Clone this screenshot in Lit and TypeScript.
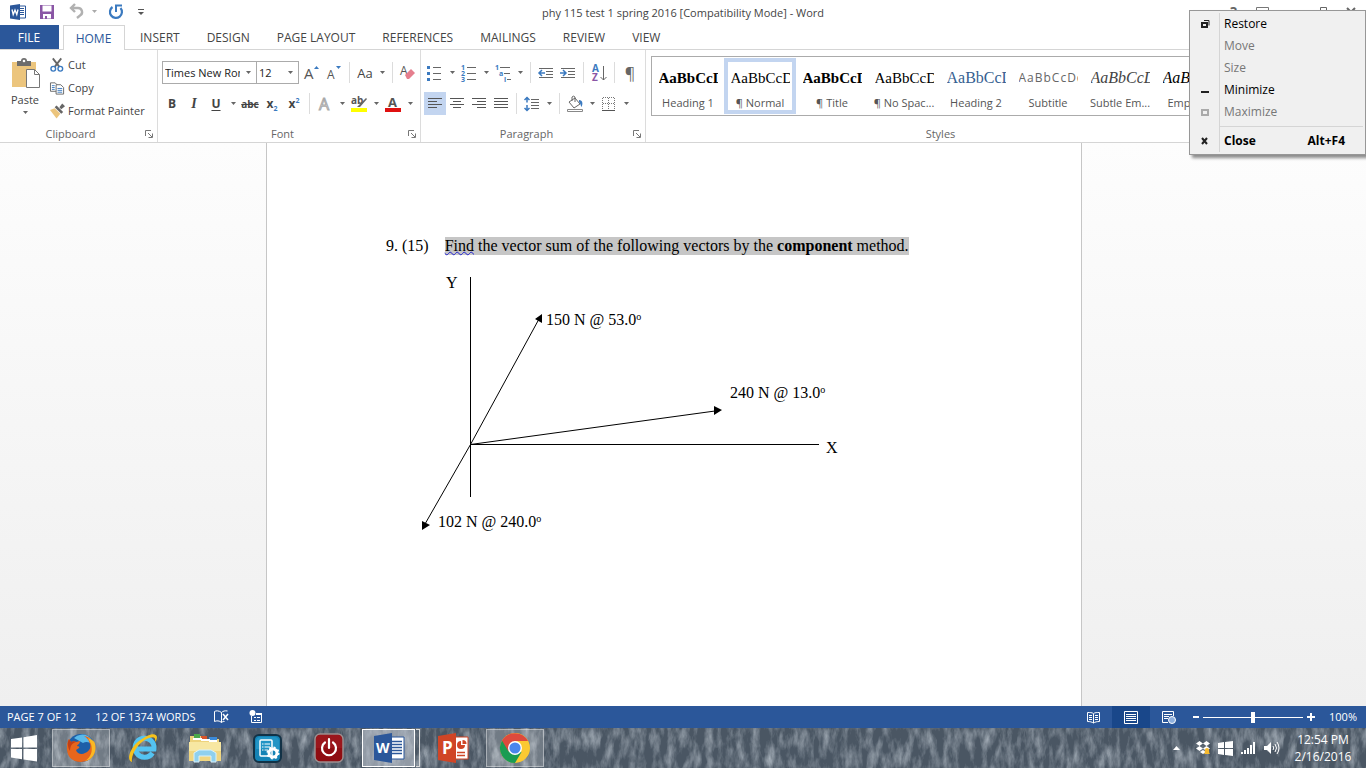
import { LitElement, html, css, svg } from "lit";
import { customElement } from "lit/decorators.js";
import { classMap } from "lit/directives/class-map.js";

const icon = (body: unknown, w = 16, h = 16) =>
  html`<svg class="ico" width=${w} height=${h} viewBox="0 0 ${w} ${h}" fill="none" aria-hidden="true">${body}</svg>`;

const caret = icon(svg`<path d="M0 0h5L2.500 3z" fill="#666"/>`, 5, 3);

const WORD_SMALL = svg`
  <path d="M9 2h6.500v12H9z" fill="#fff" stroke="#2b579a"/>
  <path d="M10 4.500h4M10 6.500h4M10 8.500h4M10 10.500h4" stroke="#2b579a"/>
  <path d="M0 1.500 10 0v16L0 14.500z" fill="#2b579a"/>
  <path d="M2 5.500l1.200 5L5 6l1.800 4.500 1.200-5" stroke="#fff" stroke-width="1.300"/>`;
const SAVE = svg`
  <path d="M1 1h14v14H1z" fill="#8a56a5"/>
  <path d="M3.500 1.500h9v6h-9z" fill="#fff"/><path d="M4 10h8v4.500H4z" fill="#fff"/>
  <path d="M6 12h2v3H6z" fill="#8a56a5"/>`;
const UNDO = svg`<path d="M6 0 2 4l4 4M2.500 4H9a4 4 0 0 1 2 7.500L8 14" stroke="#b1b1b1" stroke-width="2.400"/>`;
const REDO = svg`<path d="M4.500 3a6 6 0 1 0 8 1" stroke="#3b7ac0" stroke-width="2.200"/><path d="M8 8V1.500h6" stroke="#3b7ac0" stroke-width="2"/>`;
const CUSTOM = svg`<path d="M0 .5h6" stroke="#555"/><path d="M0 3h6L3 6z" fill="#555"/>`;

const PASTE = svg`
  <path d="M1 4h24v25H1z" fill="#ecc57d"/>
  <path d="M6 3h4a3 3 0 0 1 6 0h4v5H6z" fill="#6d6d6d"/><circle cx="13" cy="3" r="1.300" fill="#fff"/>
  <path d="M15.500 11.500h8l5 5v13h-13z" fill="#fff" stroke="#777"/>
  <path d="M23.500 11.500v5h5" stroke="#777"/>`;
const CUT = svg`
  <path d="M3 1l7 9M12 1 5 10" stroke="#666" stroke-width="2"/>
  <circle cx="3.500" cy="12" r="2.500" stroke="#3b7ac0" stroke-width="1.500"/>
  <circle cx="11" cy="12" r="2.500" stroke="#3b7ac0" stroke-width="1.500"/>`;
const COPY = svg`
  <path d="M.5 2.500h5l2 2v7h-7z" fill="#fff" stroke="#666"/><path d="M2 5.500h3M2 7.500h3M2 9.500h3" stroke="#3b7ac0"/>
  <path d="M6.500 4.500h5l3 3v7h-8z" fill="#fff" stroke="#666"/><path d="M8 8.500h5M8 10.500h5M8 12.500h5" stroke="#3b7ac0"/>`;
const PAINTER = svg`
  <path d="M0 7l5-2 6 6-4 5z" fill="#ecc57d"/>
  <path d="M5 4l2-2 7 7-2 2z" fill="#666"/><path d="M10 4l3-4 3 3-4 3z" fill="#666"/>`;
const LAUNCH = svg`<path d="M.5 6V.5H6" stroke="#777"/><path d="M3 3l4 4M7.500 3.500v4h-4" stroke="#777"/>`;

const glyph = (t: string, cls: string) => html`<span class=${cls}>${t}</span>`;
const ERASER = svg`<text x="0" y="10" class="g12">A</text><path d="M5 10l6-6 4 4-6 6H7z" fill="#e57f8e"/>`;
const GROW = svg`<text x="0" y="14" class="g15">A</text><path d="M10 4h5l-2.500-3z" fill="#3b7ac0"/>`;
const SHRINK = svg`<text x="1" y="14" class="g12">A</text><path d="M10 1h5l-2.500 3z" fill="#3b7ac0"/>`;
const EFFECTS = svg`<text x="2" y="14" class="fx">A</text>`;
const HILITE = svg`<text x="0" y="8" class="g10">ab</text><path d="M6 11l9-9 1 1-7 8z" fill="#666"/><path d="M0 12h16v4H0z" fill="#ff0"/>`;
const FCOLOR = svg`<text x="3" y="11" class="g13">A</text><path d="M0 12h16v4H0z" fill="#e01010"/>`;
const BULLETS = svg`<path d="M6 2.500h8M6 8.500h8M6 14.500h8" stroke="#666"/><path d="M0 1h3v3H0zM0 7h3v3H0zM0 13h3v3H0z" fill="#3b7ac0"/>`;
const NUMBERS = svg`<path d="M6 2.500h9M6 8.500h9M6 14.500h9" stroke="#666"/><text x="0" y="5" class="n">1</text><text x="0" y="11" class="n">2</text><text x="0" y="17" class="n">3</text>`;
const MULTI = svg`<path d="M5 2.500h10M9 8.500h6M12 14.500h4" stroke="#666"/><text x="0" y="5" class="n">1</text><text x="4" y="11" class="n">a</text><text x="9" y="17" class="n">i</text>`;
const OUTDENT = svg`<path d="M1 3.500h14M8 6.500h7M8 9.500h7M1 12.500h14" stroke="#666"/><path d="M7 8H1M4 5 1 8l3 3" stroke="#3b7ac0" stroke-width="1.500"/>`;
const INDENT = svg`<path d="M1 3.500h14M8 6.500h7M8 9.500h7M1 12.500h14" stroke="#666"/><path d="M0 8h6M3 5l3 3-3 3" stroke="#3b7ac0" stroke-width="1.500"/>`;
const SORT = svg`<text x="1" y="7" class="sa">A</text><text x="1" y="16" class="sz">Z</text><path d="M12.500 1v14M9.500 12l3 3 3-3" stroke="#666"/>`;
const lines = (d: string) => svg`<path d=${d} stroke="#555"/>`;
const LEFT = lines("M1 2.500h14M1 5.500h9M1 8.500h14M1 11.500h9");
const CENTER = lines("M1 2.500h14M4 5.500h8M1 8.500h14M4 11.500h8");
const RIGHT = lines("M1 2.500h14M6 5.500h9M1 8.500h14M6 11.500h9");
const FULL = lines("M1 2.500h14M1 5.500h14M1 8.500h14M1 11.500h14");
const SPACING = svg`<path d="M7 3.500h8M7 6.500h8M7 9.500h8M7 12.500h8" stroke="#666"/><path d="M3 1v5.500M.5 4 3 1.500 5.500 4M3 9v5.500M.5 12 3 14.500 5.500 12" stroke="#3b7ac0" stroke-width="1.500"/>`;
const SHADING = svg`<path d="M2 6l6-4 5 6-6 4z" fill="#fff" stroke="#666"/><path d="M8 6V1a2 2 0 0 0-3 0v4" stroke="#666"/><path d="M12 4c4 0 4 4 2.500 7-1-1-.5-3-2.500-5z" fill="#3b7ac0"/><path d="M.5 13.500h15v2H.5z" fill="#fff" stroke="#888"/>`;
const BORDERS = svg`<path d="M1.500 2v12M7.500 2v12M13.500 2v12M2 1.500h12M2 7.500h12" stroke="#777" stroke-dasharray="1 1"/><path d="M1 14.500h13" stroke="#555"/>`;

const WIN = svg`<path d="M0 4l11-1.600v10.100H0zM12.500 2.200 26 0v12.500H12.500zM0 14h11v10.200L0 22.600zM12.500 14H26v12.400l-13.500-2z" fill="#fff"/>`;
const FIREFOX = svg`
  <circle cx="15" cy="15" r="14" fill="#1d5fa8"/>
  <path d="M8 5a12 12 0 0 1 14-2c4 3 5 6 5 9-3-3-7-4-10-2z" fill="#58b9ea"/>
  <path d="M29 11c2 9-4 18-14 18S0 22 1 13c0-3 1-5 2-7l2 3c2-1 4-1 5 0l4-1c0 3-3 4-3 5 2 0 3 1 2 2l-3 2c1 4 6 5 9 3 5-2 6-6 5-9-1-4-3-6-6-8 7 1 9 5 9 9z" fill="#e8661c"/>
  <path d="M29 11c2 9-3 16-10 17 6-4 8-10 6-17l-3-6c5 2 7 4 7 6z" fill="#fbb823"/>
  <path d="M3 6l2 3c2-1 4-1 5 0-4 1-6 4-6 9-2-3-3-8-1-12z" fill="#c13f16"/>`;
const IE = svg`
  <path d="M24.500 20a9.500 9.500 0 1 1 1.500-4H9" stroke="#54c3f1" stroke-width="5"/>
  <path d="M4 29c-6-2-2-14 7-21S28-1 29 4c0 2-1 4-2 5 1-4-1-6-6-4C12 8 3 20 4 29z" fill="#f7c21b"/>`;
const FOLDER = svg`
  <path d="M1 3h12l2 3h15v20H1z" fill="#eed37c"/>
  <path d="M5 1h6v5H5z" fill="#4aa84a"/><path d="M12 3h6v4h-6z" fill="#d9542b"/><path d="M20 4h8v4h-8z" fill="#3b8ad8"/>
  <path d="M4 5h9v2H4zM12 6h9v2h-9zM20 7h8v2h-8z" fill="#fff"/>
  <path d="M0 9h32v19H0z" fill="#f7e7a2"/><path d="M0 18h32v10H0z" fill="#f0d680"/>
  <path d="M5 29v-9l5-3h12l5 3v9h-5v-6H10v6z" fill="#8fd0ee" stroke="#d8f1fb"/>`;
const TASKS = svg`
  <rect x="1" y="1" width="27" height="27" rx="5" fill="#1583b5" stroke="#123246" stroke-width="2"/>
  <path d="M3 15h23V8q0-5-5-5H8Q3 3 3 8z" fill="#2ba0d0" opacity=".6"/>
  <rect x="7" y="6" width="12" height="16" rx="1" stroke="#fff" stroke-width="1.500"/>
  <path d="M9 10h8M9 13h8M9 16h6" stroke="#fff" stroke-dasharray="1.500 1 12"/>
  <circle cx="20" cy="19" r="4" stroke="#fff" stroke-width="3"/><circle cx="20" cy="19" r="5.500" stroke="#fff" stroke-width="2" stroke-dasharray="2 2.300"/>`;
const POWER = svg`
  <rect x="1" y="1" width="28" height="28" rx="5" fill="#8f0d12" stroke="#9d8f90" stroke-width="1.500"/>
  <path d="M2 15h26V6q0-4-4-4H6Q2 2 2 6z" fill="#a52026" opacity=".5"/>
  <path d="M11 9.500a7 7 0 1 0 8 0M15 6v9" stroke="#fff" stroke-width="2.200" stroke-linecap="round"/>`;
const WORD = svg`
  <path d="M16 4h14v22H16z" fill="#fff" stroke="#2b579a"/>
  <path d="M18 8.500h10M18 11.500h10M18 14.500h10M18 17.500h10M18 20.500h10" stroke="#2b579a" stroke-width="1.500"/>
  <path d="M0 3l18-3v30L0 27z" fill="#2b579a"/><text x="2" y="20" class="appw">W</text>`;
const PPT = svg`
  <path d="M16 4h14v22H16z" fill="#fff" stroke="#d04526"/>
  <path d="M19 19.500h8M19 22.500h8" stroke="#d04526" stroke-width="1.500"/><path d="M23 8a4 4 0 1 0 4 4h-4z" fill="#d04526"/><path d="M24.500 7a4 4 0 0 1 4 4h-4z" fill="#d04526"/>
  <path d="M0 3l18-3v30L0 27z" fill="#d04526"/><text x="4" y="21" class="appp">P</text>`;
const CHROME = svg`
  <circle cx="15" cy="15" r="15" fill="#fbc932"/>
  <path d="M15 15 2 7.500A15 15 0 0 0 15 30l6.500-11z" fill="#1a9c52"/>
  <path d="M2 7.500A15 15 0 0 1 28 8H15L8.500 18.500z" fill="#dd4a3d"/>
  <circle cx="15" cy="15" r="7" fill="#fff"/><circle cx="15" cy="15" r="5.600" fill="#4a86ec"/>`;

const PROOF = svg`<path d="M7.500 3.500v10M7.500 3.500C5 1.500 2 1.500 .5 2.500v10c2-1 5-1 7 1 1-1 2-1 3-1M7.500 3.500C9 2 11 1.500 13.500 2" stroke="#fff"/><path d="M9 5l5 6M14 5l-5 6" stroke="#fff" stroke-width="1.500"/>`;
const MACRO = svg`<path d="M2.500 7v6.500h10v-9H8" stroke="#fff"/><circle cx="3.500" cy="4" r="3" fill="#fff"/><path d="M7 4h6v2H7z" fill="#fff"/><path d="M5 8.500h2M8 8.500h3M5 11.500h2M8 11.500h3" stroke="#fff"/>`;
const READ = svg`<path d="M6.500 3v9M6.500 2.500C5 1.500 3 1.500.5 1.500v9c2.500 0 4.500.5 6 1.500 1.500-1 3.500-1.500 6-1.500v-9c-2.500 0-4.500 0-6 1M2 4.500h3M2 6.500h3M2 8.500h3M8 4.500h3M8 6.500h3M8 8.500h3" stroke="#fff"/>`;
const PRINT = svg`<path d="M.5.500h13v12H.5z" stroke="#fff"/><path d="M2 3.500h10M2 5.500h10M2 7.500h10M2 9.500h10" stroke="#fff"/>`;
const WEB = svg`<path d="M6 11.500H.5V.500h11V5M2 3.500h8M2 5.500h5M2 7.500h4" stroke="#fff"/><circle cx="10" cy="9" r="3.500" fill="#8fb0dd" stroke="#fff"/>`;

@customElement("word-ribbon")
class WordRibbon extends LitElement {
  static styles = css`
    :host { display: flex; flex: none; height: 92px; padding-right: 120px; background: #fff; border-bottom: 1px solid #d5d5d5; font: 11px/16px "Open Sans", sans-serif; color: #444; }
    button { font: inherit; color: inherit; background: none; border: 0; padding: 0; margin: 0; display: flex; align-items: center; justify-content: center; white-space: nowrap; }
    svg.ico { display: block; overflow: visible; flex: none; }
    .group { display: flex; flex-direction: column; padding-top: 11px; border-right: 1px solid #dcdcdc; margin: 0; box-sizing: border-box; }
    .grow { flex: 1; min-width: 0; border: 0; padding: 6px 0 0 5px; }
    .foot { display: flex; align-items: center; height: 16px; margin-top: auto; text-align: center; color: #666; }
    .foot span { flex: 1; }
    .foot button { width: 16px; height: 16px; }
    .clip { width: 158px; padding-top: 3px; }
    .clipbody { display: flex; }
    .paste { flex-direction: column; justify-content: flex-start; width: 50px; padding-top: 5px; gap: 4px; }
    .paste span { line-height: 15px; }
    .side { display: flex; flex-direction: column; }
    .side button { height: 23px; gap: 3px; justify-content: flex-start; }
    .side svg { width: 15px; }
    .font { width: 263px; padding-left: 3px; }
    .para { width: 225px; padding-left: 3px; }
    .row { display: flex; align-items: center; height: 23px; margin-bottom: 8px; }
    .tool { width: 22px; height: 23px; }
    .tool.on { background: #c3d5f0; }
    .drop { width: 12px; height: 23px; }
    .sep { width: 1px; height: 21px; margin: 0 4px; background: #dcdcdc; }
    select { appearance: none; box-sizing: border-box; height: 23px; border: 1px solid #ababab; border-radius: 0; margin: 0 0 0 1px; padding: 0 0 0 2px; font: 11px/16px "Open Sans", sans-serif; color: #222; background: #fff url("data:image/svg+xml,%3Csvg xmlns='http://www.w3.org/2000/svg' width='5' height='3'%3E%3Cpath d='M0 0h5L2.500 3z' fill='%23666'/%3E%3C/svg%3E") no-repeat right 5px center; }
    .name { width: 95px; padding-right: 16px; }
    .size { width: 43px; margin-left: -1px; margin-right: 2px; }
    .b { font: bold 12px "Open Sans"; }
    .i { font: italic bold 14px "Liberation Serif"; }
    .u { font: bold 12px "Open Sans"; text-decoration: underline; text-underline-offset: 2px; }
    .s { font: bold 10px "Open Sans"; text-decoration: line-through; }
    .aa { font: 13px "Open Sans"; }
    .pil { font: 16px "Open Sans"; color: #666; }
    sub, sup { font-size: 7px; color: #3b7ac0; line-height: 0; }
    text { fill: #555; font-family: "Open Sans"; }
    .g15 { font-size: 15px; } .g13 { font-size: 13px; font-weight: bold; } .g12 { font-size: 12px; } .g10 { font-size: 10px; font-weight: bold; }
    .fx { font-size: 16px; fill: #fff; stroke: #aaa; }
    .n { font-size: 7px; font-weight: bold; fill: #3b7ac0; }
    .sa { font-size: 10px; font-weight: bold; fill: #3b7ac0; } .sz { font-size: 10px; font-weight: bold; fill: #8a56a5; }
    .gallery { display: flex; overflow: hidden; height: 58px; border: 1px solid #ababab; }
    .style { flex: none; box-sizing: border-box; width: 72px; margin: 1px 0; padding-top: 5px; flex-direction: column; justify-content: flex-start; gap: 7px; border: 4px solid transparent; }
    .style.on { border-color: #c3d5f0; }
    .sample { width: 59px; height: 22px; flex: none; overflow: hidden; text-align: left; font: 16px/22px "Liberation Serif", serif; color: #000; }
    .label { line-height: 14px; color: #555; }
    .bold { font-weight: bold; font-size: 15px; }
    .plain { font-size: 15px; }
    .h2 { font-size: 16px; color: #365f91; }
    .sub { font: 12px/22px "Open Sans"; letter-spacing: 1px; color: #666; }
    .sem { font-style: italic; color: #444; }
    .em { font-style: italic; }
  `;

  private tool(label: string, body: unknown, on = false) {
    return html`<button class=${classMap({ tool: true, on })} aria-label=${label}>${body}</button>`;
  }
  private drop(label: string) {
    return html`<button class="drop" aria-label="${label} options">${caret}</button>`;
  }
  private foot(label: string, launcher = true) {
    return html`<div class="foot"><span>${label}</span>${launcher ? html`<button aria-label="${label} settings">${icon(LAUNCH, 8, 8)}</button>` : html`<button disabled aria-hidden="true"></button>`}</div>`;
  }

  render() {
    const sep = html`<i class="sep"></i>`;
    const styles = [
      ["bold", "AaBbCcDd", "Heading 1"], ["plain", "AaBbCcDd", "¶ Normal"], ["bold", "AaBbCcDd", "¶ Title"],
      ["plain", "AaBbCcDd", "¶ No Spac..."], ["h2", "AaBbCcDd", "Heading 2"], ["sub", "AaBbCcDd", "Subtitle"],
      ["sem", "AaBbCcDd", "Subtle Em..."], ["em", "AaBbCcDd", "Emphasis"],
    ];
    return html`
      <section class="group clip">
        <div class="clipbody">
          <button class="paste">${icon(PASTE, 29, 30)}<span>Paste</span>${caret}</button>
          <div class="side">
            <button>${icon(CUT)}Cut</button>
            <button>${icon(COPY)}Copy</button>
            <button>${icon(PAINTER)}Format Painter</button>
          </div>
        </div>
        ${this.foot("Clipboard")}
      </section>
      <section class="group font">
        <div class="row">
          <select class="name" aria-label="Font"><option>Times New Roman</option></select>
          <select class="size" aria-label="Font size"><option>12</option></select>
          ${this.tool("Grow font", icon(GROW))}${this.tool("Shrink font", icon(SHRINK))}${sep}
          ${this.tool("Change case", glyph("Aa", "aa"))}${this.drop("Change case")}${sep}
          ${this.tool("Clear formatting", icon(ERASER))}
        </div>
        <div class="row">
          ${this.tool("Bold", glyph("B", "b"))}${this.tool("Italic", glyph("I", "i"))}
          ${this.tool("Underline", glyph("U", "u"))}${this.drop("Underline")}
          ${this.tool("Strikethrough", glyph("abc", "s"))}
          ${this.tool("Subscript", html`<span class="b">x<sub>2</sub></span>`)}
          ${this.tool("Superscript", html`<span class="b">x<sup>2</sup></span>`)}${sep}
          ${this.tool("Text effects", icon(EFFECTS))}${this.drop("Text effects")}
          ${this.tool("Highlight", icon(HILITE))}${this.drop("Highlight")}
          ${this.tool("Font color", icon(FCOLOR))}${this.drop("Font color")}
        </div>
        ${this.foot("Font")}
      </section>
      <section class="group para">
        <div class="row">
          ${this.tool("Bullets", icon(BULLETS))}${this.drop("Bullets")}
          ${this.tool("Numbering", icon(NUMBERS))}${this.drop("Numbering")}
          ${this.tool("Multilevel list", icon(MULTI))}${this.drop("Multilevel list")}${sep}
          ${this.tool("Decrease indent", icon(OUTDENT))}${this.tool("Increase indent", icon(INDENT))}${sep}
          ${this.tool("Sort", icon(SORT))}${sep}
          ${this.tool("Show marks", glyph("¶", "pil"))}
        </div>
        <div class="row">
          ${this.tool("Align left", icon(LEFT), true)}${this.tool("Center", icon(CENTER))}
          ${this.tool("Align right", icon(RIGHT))}${this.tool("Justify", icon(FULL))}${sep}
          ${this.tool("Line spacing", icon(SPACING))}${this.drop("Line spacing")}${sep}
          ${this.tool("Shading", icon(SHADING))}${this.drop("Shading")}
          ${this.tool("Borders", icon(BORDERS))}${this.drop("Borders")}
        </div>
        ${this.foot("Paragraph")}
      </section>
      <section class="group grow">
        <div class="gallery">
          ${styles.map(([cls, text, label], i) => html`
            <button class=${classMap({ style: true, on: i === 1 })}>
              <span class="sample ${cls}">${text}</span><span class="label">${label}</span>
            </button>`)}
        </div>
        ${this.foot("Styles", false)}
      </section>`;
  }
}

@customElement("word-page")
class WordPage extends LitElement {
  static styles = css`
    :host { display: flex; flex: 1; min-height: 0; overflow: hidden; justify-content: center; padding-right: 18px; background: linear-gradient(#fdfdfd, #efefef); font: 16px/18px "Liberation Serif", "Times New Roman", serif; color: #000; }
    .page { box-sizing: border-box; width: 816px; background: #fff; border: solid #c6c6c6; border-width: 0 1px; padding: 94px 96px 0 119px; }
    .question { display: flex; margin: 0; gap: 16px; white-space: nowrap; }
    .picked { background: #c6c6c6; }
    .flag { text-decoration: underline wavy #2020d0 1px; text-underline-offset: 0; }
    svg { display: block; margin-top: 7px; overflow: visible; }
    .o { font-size: 10px; }
  `;
  render() {
    const label = (x: number, y: number, t: string) => svg`<text x=${x} y=${y}>${t}<tspan class="o" dy="-5">o</tspan></text>`;
    return html`
      <article class="page">
        <p class="question">
          <span>9. (15)</span>
          <span class="picked"><span class="flag">Find</span> the vector sum of the following vectors by the <b>component</b> method.</span>
        </p>
        <svg width="480" height="280" viewBox="0 0 480 280" role="img" aria-label="Vector diagram">
          <path d="M84.500 15v220M84 182.500h349" stroke="#000"/>
          <path d="M84.500 182.500 153 57M84.500 182.500 329 149M84.500 182.500 39 262" stroke="#000"/>
          <path d="M156 52v9l-7-4zM336 148l-8-4v9zM36 268v-9l8 4z"/>
          <text x="60" y="26">Y</text><text x="440" y="191">X</text>
          ${label(160, 63, "150 N @ 53.0")}${label(344, 136, "240 N @ 13.0")}${label(52, 265, "102 N @ 240.0")}
        </svg>
      </article>`;
  }
}

@customElement("app-root")
class AppRoot extends LitElement {
  static styles = css`
    :host { display: flex; flex-direction: column; height: 100vh; overflow: hidden; position: relative; font: 11px/16px "Open Sans", sans-serif; color: #444; background: #fff; }
    button { font: inherit; color: inherit; background: none; border: 0; padding: 0; margin: 0; display: flex; align-items: center; justify-content: center; white-space: nowrap; }
    svg.ico { display: block; overflow: visible; flex: none; }
    .title { display: grid; grid-template-columns: 1fr auto 1fr; align-items: center; flex: none; height: 25px; }
    .quick { display: flex; align-items: center; padding-left: 9px; padding-bottom: 2px; }
    .quick button { width: 18px; height: 22px; }
    .quick .save { width: 40px; }
    .quick .mid { width: 20px; }
    .quick .thin { width: 14px; }
    .quick .wide { width: 30px; }
    .caption { display: flex; justify-content: flex-end; padding-right: 1px; padding-bottom: 2px; }
    .caption button { width: 29px; height: 22px; }
    .caption .gap { margin-right: 30px; }
    .caption .q { font: bold 14px "Open Sans"; color: #666; }
    .tabs { display: flex; flex: none; height: 25px; box-sizing: border-box; border-bottom: 1px solid #d5d5d5; line-height: 24px; }
    .tabs button { padding: 2px 14px 0 13px; font-size: 12px; height: 24px; }
    .tabs .file { width: 59px; margin-right: 4px; background: #2b579a; color: #fff; }
    .tabs .home { box-sizing: border-box; width: 62px; height: 25px; margin-right: 2px; border: 1px solid #d5d5d5; border-bottom: 0; background: #fff; color: #2b579a; }
    .status { display: flex; align-items: center; flex: none; height: 22px; padding: 0 9px 0 7px; background: #2b579a; color: #fff; }
    .status .words { margin: 0 20px 0 19px; }
    .status .tick { width: 14px; margin-right: 21px; }
    .push { margin-left: auto; }
    .status .view { width: 38px; height: 22px; }
    .status .view.on { background: #19478a; }
    .status .step { width: 15px; height: 22px; }
    input { appearance: none; width: 100px; height: 22px; margin: 0; background: linear-gradient(#fff, #fff) center / 100% 1px no-repeat; }
    input::-webkit-slider-thumb { appearance: none; width: 4px; height: 11px; background: #fff; }
    .pct { width: 39px; text-align: right; }
    .task { display: flex; align-items: center; flex: none; height: 40px; gap: 4px; color: #fff; background-color: #4a5663; background-image: url("data:image/svg+xml,%3Csvg xmlns='http://www.w3.org/2000/svg' width='683' height='40'%3E%3Cfilter id='n' x='0' y='0' width='100%25' height='100%25'%3E%3CfeTurbulence type='fractalNoise' baseFrequency='.13 .05' numOctaves='4' seed='4' stitchTiles='stitch'/%3E%3CfeColorMatrix values='0 0 0 0 .68 0 0 0 0 .74 0 0 0 0 .8 1.100 0 0 0 -.42'/%3E%3C/filter%3E%3Crect width='683' height='40' filter='url(%23n)'/%3E%3C/svg%3E"); }
    .app { box-sizing: border-box; width: 58px; height: 38px; border: 1px solid transparent; }
    .start { width: 48px; }
    .open { background: rgba(255,255,255,.22); border-color: rgba(255,255,255,.4); }
    .active { border: 0; gap: 1px; align-items: stretch; }
    .face { display: flex; align-items: center; justify-content: center; width: 54px; box-sizing: border-box; border: 1px solid #fff; background: rgba(215,222,232,.5); }
    .edge { width: 3px; border: 1px solid #ddd; border-left: 0; }
    text { fill: #fff; font-family: "Open Sans"; font-weight: bold; }
    .appw { font-size: 14px; } .appp { font-size: 17px; }
    .tray { display: flex; align-items: center; gap: 8px; margin-left: auto; padding-right: 14px; }
    .clock { width: 58px; margin-left: 6px; text-align: center; font-size: 12px; line-height: 17px; white-space: nowrap; }
    .menu { position: absolute; top: 10px; right: 0; width: 177px; box-sizing: border-box; padding: 2px 0; border: 1px solid #979797; background: linear-gradient(#d5d5d5, #d5d5d5) 29px 2px / 1px calc(100% - 4px) no-repeat #f0f0f0; box-shadow: 3px 3px 3px rgba(0,0,0,.45); color: #000; }
    .menu button { display: grid; grid-template-columns: 34px 1fr auto; width: 100%; height: 22px; padding-right: 20px; text-align: left; font-size: 12px; }
    .menu button:disabled { color: #777; }
    .menu .strong { font-weight: bold; }
    hr { border: 0; height: 1px; margin: 3px 2px 3px 30px; background: #d5d5d5; }
  `;

  private menuItem(label: string, mark: unknown, enabled: boolean, key = "") {
    return html`<button role="menuitem" class=${classMap({ strong: !!key })} ?disabled=${!enabled}><span>${mark}</span><span>${label}</span><span>${key}</span></button>`;
  }

  render() {
    const m = (b: unknown) => html`<svg class="ico" width="30" height="8" viewBox="-11 0 30 8" fill="none" aria-hidden="true">${b}</svg>`;
    const tabs = ["INSERT", "DESIGN", "PAGE LAYOUT", "REFERENCES", "MAILINGS", "REVIEW", "VIEW"];
    return html`
      <header class="title">
        <div class="quick">
          <button aria-label="Word">${icon(WORD_SMALL)}</button>
          <button class="save" aria-label="Save">${icon(SAVE)}</button>
          <button class="mid" aria-label="Undo">${icon(UNDO)}</button>
          <button class="thin" aria-label="Undo options">${icon(svg`<path d="M0 0h5L2.500 3z" fill="#aaa"/>`, 5, 3)}</button>
          <button class="wide" aria-label="Redo">${icon(REDO)}</button>
          <button class="mid" aria-label="Customize">${icon(CUSTOM, 6, 6)}</button>
        </div>
        <span>phy 115 test 1 spring 2016 [Compatibility Mode] - Word</span>
        <div class="caption">
          <button class="q" aria-label="Help">?</button>
          <button class="gap" aria-label="Ribbon display">${icon(svg`<path d="M.5.500h12v9H.5zM.5 3.500h12" stroke="#777"/>`, 13, 10)}</button>
          <button aria-label="Restore">${icon(svg`<path d="M.5 3.500h7v6h-7zM3.500 3V.500h6v6H8" stroke="#666"/>`, 10, 10)}</button>
          <button aria-label="Close">${icon(svg`<path d="M1 1l8 8M9 1 1 9" stroke="#666" stroke-width="2"/>`, 10, 10)}</button>
        </div>
      </header>
      <nav class="tabs">
        <button class="file">FILE</button><button class="home">HOME</button>
        ${tabs.map((t) => html`<button>${t}</button>`)}
      </nav>
      <word-ribbon></word-ribbon>
      <word-page></word-page>
      <footer class="status">
        <span>PAGE 7 OF 12</span><span class="words">12 OF 1374 WORDS</span>
        <button class="tick" aria-label="Proofing">${icon(PROOF)}</button>
        <button class="tick" aria-label="Macros">${icon(MACRO)}</button>
        <button class="view push" aria-label="Read mode">${icon(READ, 13, 13)}</button>
        <button class="view on" aria-label="Print layout">${icon(PRINT, 14, 13)}</button>
        <button class="view" aria-label="Web layout">${icon(WEB, 14, 13)}</button>
        <button class="step" aria-label="Zoom out">${icon(svg`<path d="M0 1h6" stroke="#fff" stroke-width="2"/>`, 6, 2)}</button>
        <input type="range" min="0" max="100" value="50" aria-label="Zoom" />
        <button class="step" aria-label="Zoom in">${icon(svg`<path d="M0 4h8M4 0v8" stroke="#fff" stroke-width="2"/>`, 8, 8)}</button>
        <span class="pct">100%</span>
      </footer>
      <footer class="task">
        <button class="app start" aria-label="Start">${icon(WIN, 26, 26)}</button>
        <button class="app open" aria-label="Firefox">${icon(FIREFOX, 30, 30)}</button>
        <button class="app" aria-label="Internet Explorer">${icon(IE, 30, 30)}</button>
        <button class="app" aria-label="File Explorer">${icon(FOLDER, 32, 30)}</button>
        <button class="app" aria-label="Task settings">${icon(TASKS, 29, 29)}</button>
        <button class="app" aria-label="Power">${icon(POWER, 30, 30)}</button>
        <button class="app active" aria-label="Word"><span class="face">${icon(WORD, 30, 30)}</span><i class="edge"></i></button>
        <button class="app" aria-label="PowerPoint">${icon(PPT, 30, 30)}</button>
        <button class="app open" aria-label="Chrome">${icon(CHROME, 30, 30)}</button>
        <div class="tray">
          ${icon(svg`<path d="M0 4h7L3.500 0z" fill="#fff"/>`, 7, 4)}
          <span></span>
          ${icon(svg`<path d="M3.500 0 7 2.500 3.500 5 0 2.500zM10.500 0 14 2.500 10.500 5 7 2.500zM3.500 5 7 7.500 3.500 10 0 7.500zM10.500 5 14 7.500 10.500 10 7 7.500zM7 9l3 2-3 2-3-2z" fill="#fff"/><path d="M8 13q1-1 1-4a2 2 0 0 1 4 0q0 3 1 4z" fill="#f5b92e"/>`, 14, 14)}
          ${icon(svg`<path d="M0 2l6-1v6H0zM7 1l8-1v7H7zM0 8h6v6l-6-1zM7 8h8v7l-8-1z" fill="#fff"/>`, 15, 15)}
          ${icon(svg`<path d="M0 12v-2h2v2zM3 12V8h2v4zM6 12V6h2v6zM9 12V3h2v9zM12 12V0h2v12z" fill="#fff"/>`, 15, 12)}
          ${icon(svg`<path d="M0 5h3l4-4v12L3 9H0z" fill="#fff"/><path d="M9 5q1.500 2 0 4M11 3q3 4 0 8M13 1q4 6 0 12" stroke="#fff"/>`, 16, 14)}
          <div class="clock">12:54 PM<br />2/16/2016</div>
        </div>
      </footer>
      <div class="menu" role="menu">
        ${this.menuItem("Restore", m(svg`<path d="M1 3h5v4H1z" stroke="#222" stroke-width="2"/><path d="M3 .500h5v5" stroke="#222"/>`), true)}
        ${this.menuItem("Move", "", false)}
        ${this.menuItem("Size", "", false)}
        ${this.menuItem("Minimize", m(svg`<path d="M0 6h8" stroke="#222" stroke-width="2"/>`), true)}
        ${this.menuItem("Maximize", m(svg`<path d="M1 2h6v5H1z" stroke="#aaa" stroke-width="2"/>`), false)}
        <hr />
        ${this.menuItem("Close", m(svg`<path d="M1 1l5 6M6 1 1 7" stroke="#222" stroke-width="2"/>`), true, "Alt+F4")}
      </div>`;
  }
}
